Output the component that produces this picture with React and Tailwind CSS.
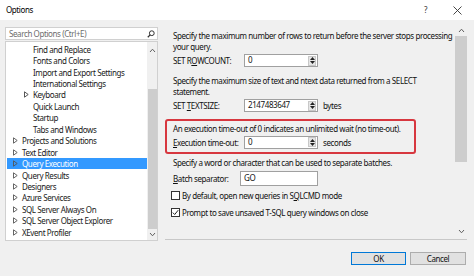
import React from "react";

const font = { fontFamily: '"Noto Sans", "Open Sans", sans-serif' };

function Arrow({ nested }) {
  return (
    <svg width="5" height="7" viewBox="0 0 5 7" className="shrink-0">
      <path d="M0.5 0.8 L4.2 3.5 L0.5 6.2 Z" fill="none" stroke={nested ? "#444" : "#555"} strokeWidth="0.9" />
    </svg>
  );
}

const items = [
  { t: "Find and Replace", lvl: 1 },
  { t: "Fonts and Colors", lvl: 1 },
  { t: "Import and Export Settings", lvl: 1 },
  { t: "International Settings", lvl: 1 },
  { t: "Keyboard", lvl: 1, arrow: true },
  { t: "Quick Launch", lvl: 1 },
  { t: "Startup", lvl: 1 },
  { t: "Tabs and Windows", lvl: 1 },
  { t: "Projects and Solutions", lvl: 0, arrow: true },
  { t: "Text Editor", lvl: 0, arrow: true },
  { t: "Query Execution", lvl: 0, arrow: true, sel: true },
  { t: "Query Results", lvl: 0, arrow: true },
  { t: "Designers", lvl: 0, arrow: true },
  { t: "Azure Services", lvl: 0, arrow: true },
  { t: "SQL Server Always On", lvl: 0, arrow: true },
  { t: "SQL Server Object Explorer", lvl: 0, arrow: true },
  { t: "XEvent Profiler", lvl: 0, arrow: true },
];

function Chevron({ down }) {
  return (
    <svg width="7" height="5" viewBox="0 0 7 5">
      <path d={down ? "M1 1 L3.5 3.8 L6 1" : "M1 4 L3.5 1.2 L6 4"} fill="none" stroke="#606060" strokeWidth="1" />
    </svg>
  );
}

function Spinner() {
  return (
    <div className="flex flex-col items-center justify-center gap-[1px] w-[8px] h-[10px] bg-[#e6e6e6] border border-[#c8c8c8] mr-[1px]">
      <svg width="5" height="3" viewBox="0 0 5 3"><path d="M0 3 L2.5 0 L5 3 Z" fill="#222" /></svg>
      <svg width="5" height="3" viewBox="0 0 5 3"><path d="M0 0 L2.5 3 L5 0 Z" fill="#222" /></svg>
    </div>
  );
}

function NumInput({ value }) {
  return (
    <div className="flex items-center justify-between w-[74px] h-[13px] bg-white border border-[#a0a0a0] shrink-0">
      <span className="pl-[3px] leading-[11px] -mt-[2px]">{value}</span>
      <Spinner />
    </div>
  );
}

function Check({ checked }) {
  return (
    <div className="w-[9px] h-[9px] border border-[#333] bg-white flex items-center justify-center shrink-0">
      {checked && (
        <svg width="7" height="7" viewBox="0 0 7 7"><path d="M0.8 3.6 L2.7 5.5 L6.2 1.2" fill="none" stroke="#222" strokeWidth="1" /></svg>
      )}
    </div>
  );
}

export default function App() {
  return (
    <div style={font} className="w-[474px] h-[276px] flex flex-col bg-[#f0f0f0] text-[8px] tracking-[-0.4px] text-[#111] overflow-hidden whitespace-nowrap">
      {/* title bar */}
      <div className="h-[20px] bg-white flex items-center shrink-0">
        <span className="pl-[6px] text-black">Options</span>
        <span className="ml-auto text-[#333] mr-[26px]">?</span>
        <svg width="9" height="9" viewBox="0 0 9 9" className="mr-[12px]"><path d="M0.5 0.5 L8.5 8.5 M8.5 0.5 L0.5 8.5" stroke="#333" strokeWidth="0.9" /></svg>
      </div>

      {/* body */}
      <div className="flex flex-1">
        {/* left */}
        <div className="w-[153px] ml-[5px] mt-[7px] flex flex-col shrink-0">
          <div className="h-[13px] bg-white border border-[#d0d0d0] flex items-center">
            <span className="pl-[3px] text-[#6d6d6d] leading-[11px]">Search Options (Ctrl+E)</span>
            <svg width="8" height="8" viewBox="0 0 8 8" className="ml-auto mr-[2px]">
              <circle cx="4.8" cy="3.2" r="2.4" fill="none" stroke="#333" strokeWidth="1" />
              <path d="M3.1 4.9 L0.8 7.2" stroke="#333" strokeWidth="1.3" />
            </svg>
          </div>
          <div className="mt-[1px] h-[200px] bg-white border border-[#d0d0d0] flex">
            <div className="flex-1 pt-[1.5px] pl-[1px]">
              {items.map((it) => (
                <div
                  key={it.t}
                  className={`h-[11.45px] flex items-center ${it.sel ? "bg-[#3399ff] text-white" : "text-[#1a1a1a]"}`}
                >
                  <div className={`flex items-center ${it.lvl ? "pl-[17px]" : "pl-[6px]"} w-full`}>
                    <div className="w-[9px] flex items-center">{it.arrow && <Arrow nested={it.lvl} />}</div>
                    <span className="leading-[11px]">{it.t}</span>
                  </div>
                </div>
              ))}
            </div>
            <div className="w-[10px] bg-[#f0f0f0] flex flex-col items-center">
              <div className="h-[12px] flex items-center justify-center mt-[2px]"><Chevron /></div>
              <div className="w-[9px] h-[140px] bg-[#cdcdcd] mt-[33px]" />
              <div className="mt-auto h-[10px] flex items-center justify-center mb-[1px]"><Chevron down /></div>
            </div>
          </div>
        </div>

        {/* right */}
        <div className="ml-[7px] mr-[7px] mt-[8px] h-[212px] flex-1 flex border-b border-[#c8c8c8]">
          <div className="flex-1 flex flex-col pl-[8px] leading-[11px]">
            <div className="mt-[1.5px]">Specify the maximum number of rows to return before the server stops processing</div>
            <div>your query.</div>
            <div className="mt-[2.5px] flex items-center">
              <span className="w-[71px]">SET R<u>O</u>WCOUNT:</span>
              <NumInput value="0" />
            </div>
            <div className="mt-[7.5px]">Specify the maximum size of text and ntext data returned from a SELECT</div>
            <div>statement.</div>
            <div className="mt-[2.5px] flex items-center">
              <span className="w-[71px]">SET <u>T</u>EXTSIZE:</span>
              <NumInput value="2147483647" />
              <span className="ml-[5px]">bytes</span>
            </div>
            <div className="-ml-[8px] mt-[7px] w-[251px] h-[35px] border-2 border-[#d7373f] rounded-[3px] pl-[6px] pt-[1.5px]">
              <div>An execution time-out of 0 indicates an unlimited wait (no time-out).</div>
              <div className="mt-[2px] flex items-center">
                <span className="w-[71px]"><u>E</u>xecution time-out:</span>
                <NumInput value="0" />
                <span className="ml-[5px]">seconds</span>
              </div>
            </div>
            <div className="mt-[2.5px]">Specify a word or character that can be used to separate batches.</div>
            <div className="mt-[3px] flex items-center">
              <span className="w-[67px]"><u>B</u>atch separator:</span>
              <div className="w-[78px] h-[15px] bg-white border border-[#a0a0a0] flex items-center">
                <span className="pl-[3px] -mt-[1px]">GO</span>
              </div>
            </div>
            <div className="mt-[4px] flex items-center gap-[2px] -ml-[2px]">
              <Check />
              <span>By default, open new queries in S<u>Q</u>LCMD mode</span>
            </div>
            <div className="mt-[6px] flex items-center gap-[2px] -ml-[2px]">
              <Check checked />
              <span>Prompt to save unsaved T-SQL query windows on close</span>
            </div>
          </div>
          <div className="w-[12px] bg-[#f0f0f0] flex flex-col items-center">
            <div className="h-[7px] flex items-center justify-center mt-[-1px]"><Chevron /></div>
            <div className="w-[12px] h-[126px] bg-[#cdcdcd] mt-[2px]" />
            <div className="mt-auto h-[10px] flex items-center justify-center mb-[3px]"><Chevron down /></div>
          </div>
        </div>
      </div>

      {/* footer */}
      <div className="h-[36px] flex items-start justify-end pr-[8px] pt-[11px] shrink-0">
        <button className="w-[55px] h-[13px] bg-[#e1e1e1] border border-[#0078d7] flex items-center justify-center leading-[11px]">OK</button>
        <button className="ml-[4px] w-[56px] h-[13px] bg-[#e1e1e1] border border-[#adadad] flex items-center justify-center leading-[11px]">Cancel</button>
      </div>
    </div>
  );
}
